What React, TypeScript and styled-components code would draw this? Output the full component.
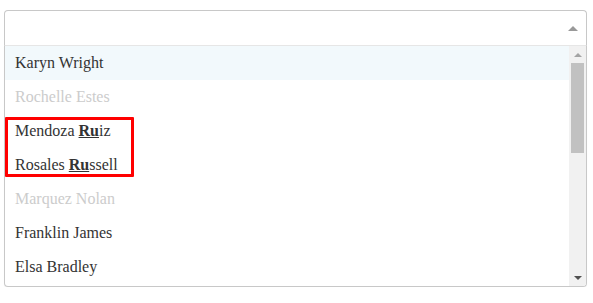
import React from 'react';
import styled, { createGlobalStyle } from 'styled-components';

const GlobalStyle = createGlobalStyle`
  body {
    margin: 0;
    background: #ffffff;
    font-family: "Liberation Serif", "DejaVu Serif", serif;
  }
`;

interface Person {
  first: string;
  last: string;
  disabled?: boolean;
  match?: number;
}

const people: Person[] = [
  { first: 'Karyn', last: 'Wright' },
  { first: 'Rochelle', last: 'Estes', disabled: true },
  { first: 'Mendoza', last: 'Ruiz', match: 2 },
  { first: 'Rosales', last: 'Russell', match: 2 },
  { first: 'Marquez', last: 'Nolan', disabled: true },
  { first: 'Franklin', last: 'James' },
  { first: 'Elsa', last: 'Bradley' },
];

const App = () => {
  return (
    <Page>
      <GlobalStyle />
      <Select>
        <Control>
          <Caret />
        </Control>
        <Menu>
          <Options>
            {people.map((p, i) => (
              <Option key={p.first} $active={i === 0} $disabled={p.disabled}>
                {p.first}{' '}
                {p.match ? (
                  <>
                    <Mark>{p.last.slice(0, p.match)}</Mark>
                    {p.last.slice(p.match)}
                  </>
                ) : (
                  p.last
                )}
              </Option>
            ))}
            <Highlight />
          </Options>
          <Scrollbar>
            <ScrollButton>
              <Arrow $dir='up' />
            </ScrollButton>
            <Thumb />
            <Track />
            <ScrollButton>
              <Arrow $dir='down' />
            </ScrollButton>
          </Scrollbar>
        </Menu>
      </Select>
    </Page>
  );
};

export default App;

const Page = styled.div`
  padding: 10px 0 0 4px;
`;

const Select = styled.div`
  width: 583px;
`;

const Control = styled.div`
  height: 34px;
  border: 1px solid #c8c8c8;
  border-bottom: 1px solid #e6e6e6;
  border-radius: 4px 4px 0 0;
  display: flex;
  align-items: center;
  justify-content: flex-end;
  padding-right: 8px;
`;

const Caret = styled.span`
  width: 0;
  height: 0;
  border-left: 5px solid transparent;
  border-right: 5px solid transparent;
  border-bottom: 5px solid #999999;
`;

const Menu = styled.div`
  height: 240px;
  display: flex;
  border: 1px solid #c8c8c8;
  border-top: none;
  border-radius: 0 0 4px 4px;
  box-shadow: 0 1px 1px rgba(0, 0, 0, 0.06);
  overflow: hidden;
`;

const Options = styled.div`
  flex: 1;
  position: relative;
`;

const Option = styled.div<{ $active?: boolean; $disabled?: boolean }>`
  height: 34px;
  display: flex;
  align-items: center;
  white-space: pre;
  padding-left: 10px;
  font-family: "Liberation Serif", "DejaVu Serif", serif;
  font-size: 16px;
  color: ${(p) => (p.$disabled ? '#cccccc' : '#333333')};
  background: ${(p) => (p.$active ? '#f2f9fc' : 'transparent')};
`;

const Mark = styled.span`
  font-weight: bold;
  text-decoration: underline;
`;

const Highlight = styled.div`
  position: absolute;
  left: 0;
  top: 71px;
  width: 123px;
  height: 54px;
  border: 3px solid #ff0000;
  border-radius: 1px;
  pointer-events: none;
`;

const Scrollbar = styled.div`
  width: 17px;
  background: #f1f1f1;
  display: flex;
  flex-direction: column;
`;

const ScrollButton = styled.div`
  height: 17px;
  display: flex;
  align-items: center;
  justify-content: center;
`;

const Arrow = styled.span<{ $dir: 'up' | 'down' }>`
  width: 0;
  height: 0;
  border-left: 4px solid transparent;
  border-right: 4px solid transparent;
  ${(p) =>
    p.$dir === 'up'
      ? 'border-bottom: 4px solid #a3a3a3;'
      : 'border-top: 4px solid #505050;'}
`;

const Thumb = styled.div`
  height: 90px;
  margin: 0 2px;
  background: #c1c1c1;
`;

const Track = styled.div`
  flex: 1;
`;
